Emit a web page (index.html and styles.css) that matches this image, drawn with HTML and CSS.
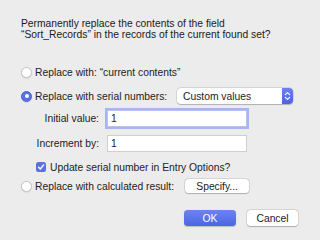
FILE: index.html
```html
<!DOCTYPE html>
<html>
<head>
<meta charset="utf-8">
<link rel="stylesheet" href="styles.css">
</head>
<body>
<div class="dialog">
  <p class="message">Permanently replace the contents of the field<br>“Sort_Records” in the records of the current found set?</p>

  <div class="row row-radio1">
    <span class="radio"></span>
    <span class="label">Replace with: “current contents”</span>
  </div>

  <div class="row row-radio2">
    <span class="radio radio-on"></span>
    <span class="label">Replace with serial numbers:</span>
    <div class="popup">
      <span class="popup-text">Custom values</span>
      <span class="stepper">
        <svg width="11" height="16" viewBox="0 0 11 16"><path d="M3.3 6.6 L5.5 4.6 L7.7 6.6" fill="none" stroke="#fff" stroke-width="1.1" stroke-linecap="round" stroke-linejoin="round"/><path d="M3.3 9.4 L5.5 11.4 L7.7 9.4" fill="none" stroke="#fff" stroke-width="1.1" stroke-linecap="round" stroke-linejoin="round"/></svg>
      </span>
    </div>
  </div>

  <div class="field-row field-row1">
    <span class="field-label">Initial value:</span>
    <div class="field field-focus">1</div>
  </div>

  <div class="field-row field-row2">
    <span class="field-label">Increment by:</span>
    <div class="field">1</div>
  </div>

  <div class="row row-check">
    <span class="checkbox">
      <svg width="10" height="10" viewBox="0 0 10 10"><path d="M2.6 5.2 L4.3 7 L7.6 2.9" fill="none" stroke="#fff" stroke-width="1.4" stroke-linecap="round" stroke-linejoin="round"/></svg>
    </span>
    <span class="label">Update serial number in Entry Options?</span>
  </div>

  <div class="row row-radio3">
    <span class="radio"></span>
    <span class="label">Replace with calculated result:</span>
    <span class="button button-specify">Specify...</span>
  </div>

  <div class="buttons">
    <span class="button button-ok">OK</span>
    <span class="button button-cancel">Cancel</span>
  </div>
</div>
</body>
</html>
```

FILE: styles.css
```css
html, body {
  margin: 0;
  padding: 0;
  background: #ececec;
}

body {
  font-family: "Liberation Sans", Arial, sans-serif;
  font-size: 10.3px;
  color: #222;
  width: 317px;
  height: 236px;
  overflow: hidden;
  white-space: nowrap;
}

.dialog {
  padding: 18px 19px 0 21px;
  box-sizing: border-box;
  height: 236px;
}

.message {
  margin: 0;
  line-height: 11px;
  color: #1a1a1a;
}

.row {
  display: flex;
  align-items: center;
}

.row-radio1 {
  height: 14px;
  margin-top: 25px;
}

.row-radio2 {
  height: 16px;
  margin-top: 9px;
}

.radio {
  width: 11px;
  height: 11px;
  border-radius: 50%;
  background: #fff;
  border: 0.5px solid #c4c4c4;
  box-shadow: 0 0.5px 1px rgba(0,0,0,0.12);
  margin-right: 3px;
  flex: none;
  box-sizing: border-box;
  display: flex;
  align-items: center;
  justify-content: center;
}

.radio-on {
  background: #5b70e2;
  border-color: #5068dc;
}

.radio-on::after {
  content: "";
  width: 4px;
  height: 4px;
  border-radius: 50%;
  background: #fff;
}

.popup {
  margin-left: auto;
  margin-right: 5px;
  width: 116px;
  height: 16px;
  background: #fff;
  border-radius: 4px;
  box-shadow: 0 0 0 0.5px rgba(0,0,0,0.18), 0 0.5px 1px rgba(0,0,0,0.18);
  display: flex;
  align-items: center;
  box-sizing: border-box;
}

.popup-text {
  flex: 1;
  padding-left: 6px;
}

.stepper {
  width: 11px;
  height: 16px;
  background: linear-gradient(#6b82ef, #4b63de);
  border-radius: 0 4px 4px 0;
  display: flex;
}

.field-row {
  display: flex;
  align-items: center;
  height: 19px;
  padding-left: 9px;
}

.field-row1 {
  margin-top: 5px;
}

.field-row2 {
  margin-top: 6px;
}

.field-label {
  width: 69px;
  text-align: right;
  margin-right: 8px;
}

.field {
  width: 140px;
  height: 17px;
  box-sizing: border-box;
  background: #fff;
  border: 1px solid #cfcfcf;
  padding-left: 3px;
  display: flex;
  align-items: center;
}

.field-focus {
  border-color: #b9c2ea;
  box-shadow: 0 0 0 2px #a8b5ee;
}

.row-check {
  height: 12px;
  margin-top: 8px;
  padding-left: 15px;
}

.checkbox {
  width: 10px;
  height: 10px;
  border-radius: 2.5px;
  background: #5b70e2;
  margin-right: 4px;
  display: flex;
  flex: none;
}

.row-radio3 {
  height: 14px;
  margin-top: 6px;
}

.button {
  display: flex;
  align-items: center;
  justify-content: center;
  height: 14px;
  background: #fff;
  border-radius: 3.5px;
  box-shadow: 0 0 0 0.5px rgba(0,0,0,0.16), 0 0.5px 1px rgba(0,0,0,0.2);
  box-sizing: border-box;
}

.button-specify {
  width: 64px;
  margin-left: 11px;
}

.buttons {
  display: flex;
  justify-content: flex-end;
  margin-top: 17px;
  gap: 11px;
}

.buttons .button {
  height: 16px;
}

.button-ok {
  width: 52px;
  background: linear-gradient(#6c84f1, #4c66e2);
  color: #fff;
  box-shadow: 0 0.5px 1px rgba(0,0,0,0.2);
}

.button-cancel {
  width: 51px;
}
```
